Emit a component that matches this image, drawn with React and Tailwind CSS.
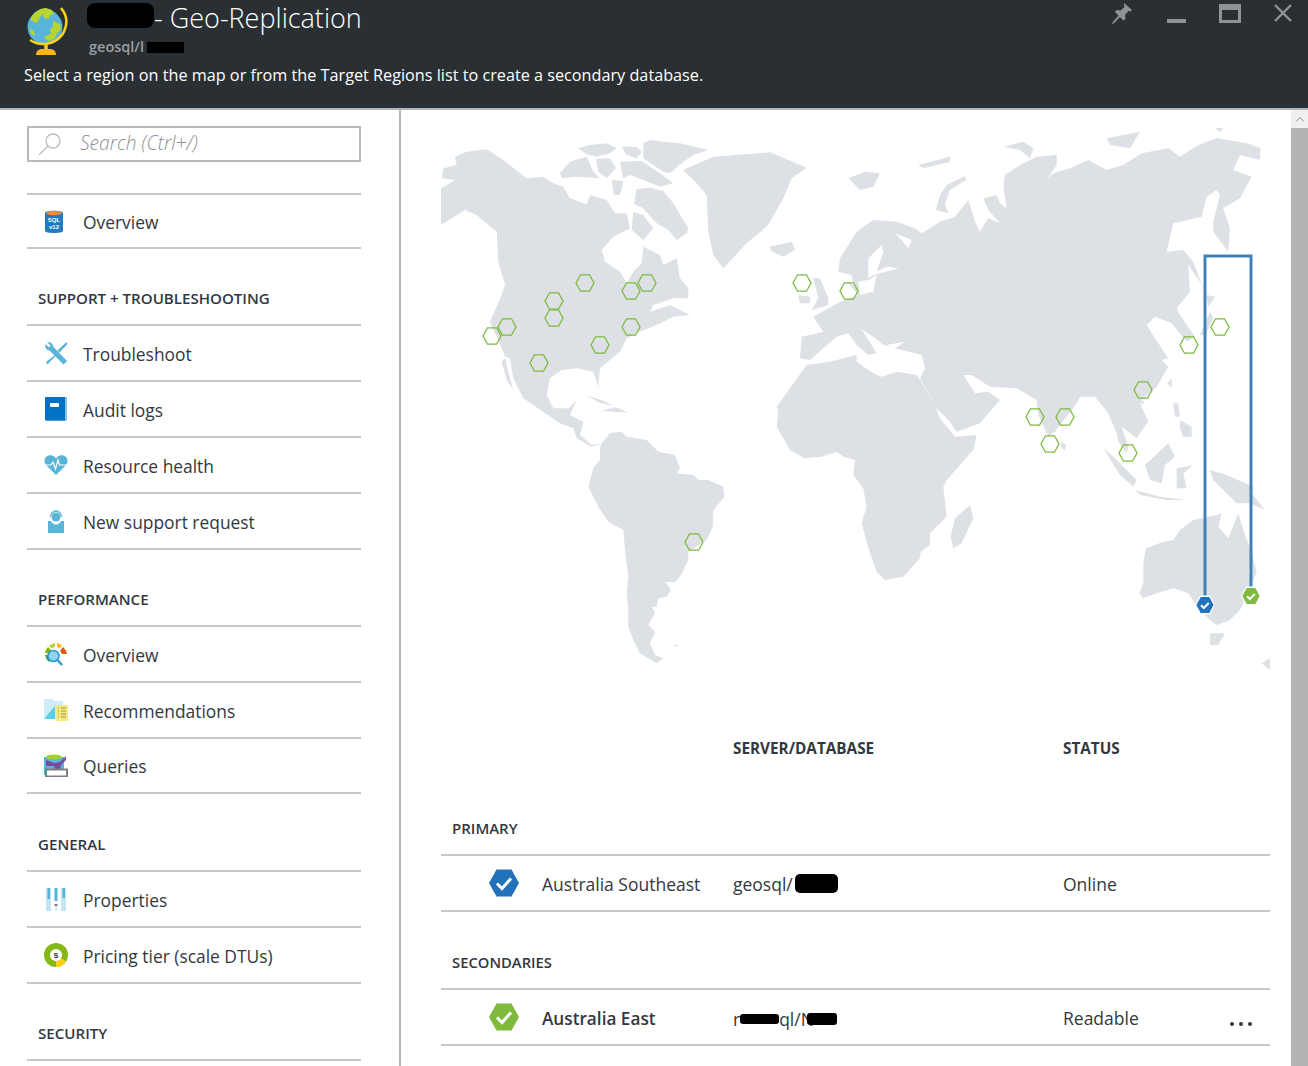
import React from 'react';

const LAND_COLOR = '#dde0e5';

// land shapes, typed in the coordinates of the crops they were traced from
const northAmerica = [
  '33,220 75,195 35,190 40,160 80,150 75,125 110,110 170,103 220,135 290,190 340,185 370,205 400,215 420,250 470,268 480,240 530,255 555,295 590,295 600,340 550,365 515,405 525,440 570,470 590,505 610,470 635,445 640,395 690,420 700,450 740,430 750,490 775,520 775,550 730,550 670,570 660,590 720,570 780,600 730,605 680,630 630,650 590,670 570,710 510,760 505,815 490,770 440,760 395,765 360,790 350,840 370,880 415,880 440,855 420,900 460,920 450,960 485,990 515,985 485,995 440,970 430,940 390,925 280,850 250,790 240,730 225,725 215,700 180,620 215,540 225,510 205,440 200,350 140,300 105,285 33,330',
  '215,740 225,730 240,790 250,825 230,795',
  '445,100 480,90 530,85 560,100 540,115 500,125 470,118',
  '640,85 660,75 700,80 750,85 835,105 790,120 760,140 720,175 700,170 640,130',
  '575,95 620,95 635,110 620,130 590,120',
  '390,175 420,140 470,125 490,170 510,190 440,185 395,190',
  '498,132 540,130 558,160 530,190 505,170',
  '570,140 635,138 700,182 730,205 690,215 640,195 600,180 580,190',
  '545,195 580,198 570,240 552,240',
  '620,222 660,218 700,228 730,265 775,340 770,355 740,375 715,345 680,325 640,280 612,268',
  '610,290 640,300 670,340 640,375 605,345',
  '760,165 850,125 1020,112 1130,158 1085,190 1060,250 1015,330 950,385 880,460 850,420 835,350 830,240 800,205',
  '1020,395 1085,380 1095,405 1060,425 1025,410',
  '1150,490 1170,490 1195,550 1195,570 1145,585 1165,550',
  '1105,540 1140,545 1140,565 1110,565',
];

const eurasia = [
  '240,790 290,880 330,920 350,951 420,925 480,855 445,830 405,835 370,780 395,780 450,815 530,820 590,855 595,900 625,965 645,950 710,865 720,845 765,845 805,895 830,955 835,980 860,1015 865,995 845,935 890,970 925,920 900,865 910,850 950,815 985,755 965,735 985,730 945,670 920,630 945,605 995,625 1040,680 1065,665 1020,600 1010,580 1050,530 1045,450 1080,500 1090,520 1060,440 1030,405 980,410 1000,325 1085,305 1100,245 1130,225 1140,240 1120,320 1120,350 1165,410 1170,340 1150,280 1200,250 1235,185 1180,165 1200,120 1260,135 1262,100 1220,85 1130,70 1075,90 1020,125 985,100 905,115 850,150 800,165 745,135 690,160 640,175 620,195 650,150 650,120 590,125 540,150 495,180 490,215 500,280 480,265 470,240 430,250 445,285 480,325 445,310 420,350 405,320 385,255 345,305 300,320 245,355 225,340 170,320 100,315 50,350 0,430 -5,470 35,480 40,510 20,500 55,540 0,560 -80,605 -50,650 -115,665 -120,730 -90,735 -50,700 -10,665 25,655 50,690 85,720 110,715 70,650 60,640 100,665 130,690 165,700 140,690 195,680 165,700 245,720 255,760',
  '288,285 300,240 320,210 375,183 378,195 330,225 315,265 325,295',
  '25,190 75,170 120,175 100,215 60,225',
  '235,150 330,125 330,140 250,160',
  '490,95 550,80 580,100 570,130 540,105',
  '800,70 900,50 870,100 810,90',
  '1125,40 1150,38 1140,50',
  '1080,660 1110,590 1120,610 1095,660',
  '1100,540 1125,545 1105,575',
];

const seas = [
  '125,390 85,430 85,490 100,480 120,475 175,460 140,455 110,470 130,410',
  '110,480 100,530 60,540 55,500 85,495',
  '165,355 215,375 205,400 185,375',
];

const southern = [
  '125,190 150,160 185,155 200,170 260,180 295,215 345,225 360,265 350,280 400,285 415,300 445,300 490,320 493,350 460,390 458,440 440,480 385,515 385,540 360,590 345,607 315,605 333,630 320,650 295,655 290,680 275,680 285,700 265,735 285,755 270,790 285,825 310,835 290,850 240,820 220,780 205,740 205,690 200,640 205,590 195,510 190,450 145,425 115,380 85,320 100,265 120,240 120,205',
  '650,80 740,-45 810,-55 890,-75 890,-55 940,-20 965,-10 1010,-25 1070,-15 1080,0 1125,75 1140,115 1185,170 1250,165 1240,210 1160,300 1150,320 1155,365 1160,410 1110,460 1110,495 1082,515 1080,535 1030,590 975,600 950,575 930,520 905,430 920,380 910,325 880,285 885,240 850,230 830,215 785,230 735,235 690,210 650,140 655,90',
  '1185,415 1230,375 1240,415 1205,490 1180,505 1172,470',
  '75,45 130,62 160,78 120,68',
  '125,92 165,82 205,97 170,96',
  '338,795 355,795 350,800',
];

const islands = [
  '562,130 575,115 575,145',
  '480,180 495,185 485,195',
  '243,305 258,315 255,330 245,325',
  '580,190 595,190 600,230 585,230',
  '600,240 635,260 635,290 610,290 600,265',
  '495,375 565,310 585,350 555,375 545,430 510,420',
  '370,325 400,350 470,420 460,440 420,405',
  '465,450 540,470 620,480 560,480 480,465',
  '590,385 640,375 610,400 620,445 590,445',
  '690,390 740,405 820,440 815,460 855,510 810,490 770,490 740,460 700,420',
];

const australia = [
  '48,205 100,185 130,180 150,150 190,120 215,115 260,105 275,100 265,140 295,175 325,100 340,150 360,205 380,275 355,340 330,390 300,420 260,435 240,420 205,385 175,340 130,325 80,340 40,355 28,340 40,310 40,250',
  '240,460 285,460 265,495 240,495',
  '395,550 420,535 420,570',
];

const regions = [
  [585, 283], [554, 301], [554, 318], [631, 291], [647, 283], [631, 327], [600, 345], [539, 363], [492, 336], [507, 327],
  [802, 283], [849, 291], [1220, 327], [1189, 345], [1143, 390], [1035, 417], [1065, 417], [1050, 444], [1128, 453], [694, 542],
];

const hexPoints = (x, y, w, h) =>
  `${x - w},${y} ${x - w / 2},${y - h} ${x + w / 2},${y - h} ${x + w},${y} ${x + w / 2},${y + h} ${x - w / 2},${y + h}`;

const Marker = ({ x, y, fill }) => (
  <g>
    <polygon points={hexPoints(x, y, 10, 9.5)} fill="#fff" />
    <polygon points={hexPoints(x, y, 8.6, 8)} fill={fill} />
    <path d={`M${x - 4} ${y + 0.3}l2.8 2.7 5-5`} fill="none" stroke="#fff" strokeWidth="2" />
  </g>
);

const WorldMap = () => (
  <svg viewBox="441 110 829 570" className="block w-[829px] h-[570px]">
    <g fill={LAND_COLOR}>
      <g transform="translate(430 115) scale(0.3333)">
        {northAmerica.map((p) => <polygon key={p} points={p} />)}
      </g>
      <g transform="translate(840 115) scale(0.3333)">
        {eurasia.map((p) => <polygon key={p} points={p} />)}
        {seas.map((p) => <polygon key={p} points={p} fill="#fff" />)}
      </g>
      <g transform="translate(560 380) scale(0.3333)">
        {southern.map((p) => <polygon key={p} points={p} />)}
      </g>
      <g transform="translate(980 340) scale(0.3333)">
        {islands.map((p) => <polygon key={p} points={p} />)}
      </g>
      <g transform="translate(1130 480) scale(0.3333)">
        {australia.map((p) => <polygon key={p} points={p} />)}
      </g>
    </g>
    {regions.map(([x, y]) => (
      <polygon key={`${x}-${y}`} points={hexPoints(x, y, 9, 8.2)} fill="none" stroke="#7dba3e" strokeWidth="1.3" />
    ))}
    <path d="M1205 600V256H1251V590" fill="none" stroke="#4083bb" strokeWidth="3" />
    <Marker x={1205} y={605} fill="#2272b9" />
    <Marker x={1251} y={596} fill="#7fba3f" />
  </svg>
);

const GlobeLogo = () => (
  <svg viewBox="0 0 42 48" className="w-[42px] h-[48px] mt-[4px]">
    <circle cx="18" cy="20" r="17.500" fill="#59b4d9" />
    <path d="M4 11c3-6 9-10 15-10l6 2 2 4-4 1-1 4-5-1-1-4-3 3-2 5-4 1-1-3-2 2zM26 14l7 3 1 6-4 3-2 5-6 3-5-3 3-3 4-1-1-5 3-2zM3 21l4 3 1 5-4-2z" fill="#b8d432" />
    <path d="M34 1c5 6 7 13 4 21-3 9-12 15-22 15-5 0-10-2-13-4" fill="none" stroke="#fcd116" strokeWidth="2.600" />
    <path d="M19 37v5" stroke="#fcd116" strokeWidth="3.500" />
    <path d="M9 48c0-4 3-6 6-6h8c3 0 6 2 6 6z" fill="#fcb714" />
  </svg>
);

const WindowControls = () => (
  <div className="flex items-start text-[#8f9396]">
    <svg viewBox="0 0 22 22" className="w-[22px] h-[22px] mr-[34px] mt-[2px]" fill="currentColor">
      <path d="M13 1l8 7-1.500 1.500-2-.5-3.500 4 .5 4-2 1.500-3.500-3.500L2 22l-1-1 6.500-7.500L4 10l1.500-2 4 .5 4-3.500-.5-2z" />
    </svg>
    <div className="w-[19px] h-[4px] bg-current mt-[19px] mr-[33px]"></div>
    <div className="w-[22px] h-[19px] border-[3px] border-t-[6px] border-current mt-[4px] mr-[33px]"></div>
    <svg viewBox="0 0 18 18" className="w-[18px] h-[18px] mt-[4px] mr-[16px]" fill="none" stroke="currentColor" strokeWidth="2.400">
      <path d="M1 1l16 16M17 1L1 17" />
    </svg>
  </div>
);

const Header = () => (
  <div className="h-[108px] bg-[#2a2f33] flex justify-between shrink-0">
    <div>
      <div className="flex pl-[27px] pt-[3px]">
        <GlobeLogo />
        <div className="ml-[18px]">
          <div className="flex items-start h-[30px] text-white font-light text-[27px] leading-[30px]">
            <span className="w-[67px] h-[25px] bg-black rounded-[8px]"></span>
            <span>- Geo-Replication</span>
          </div>
          <div className="flex items-center mt-[7px] h-[14px] pl-[2px] text-[#9a9fa3] font-semibold text-[14.500px] leading-[14px]">
            <span>geosql/l</span>
            <span className="w-[37px] h-[11px] bg-black ml-[3px]"></span>
          </div>
        </div>
      </div>
      <p className="pl-[24px] mt-[10px] text-white text-[16.230px] leading-[20px]">
        Select a region on the map or from the Target Regions list to create a secondary database.
      </p>
    </div>
    <WindowControls />
  </div>
);

const DbIcon = () => (
  <svg viewBox="0 0 20 23" className="w-[20px] h-[23px] mr-[4px]">
    <path d="M1 3c0-3 18-3 18 0v18c0 2.600-18 2.600-18 0z" fill="#1f7cc2" />
    <ellipse cx="10" cy="3" rx="8" ry="2.200" fill="#f08a3c" />
    <text x="10" y="12" textAnchor="middle" fontSize="6" fontWeight="700" fill="#fff" fontFamily="Liberation Sans, sans-serif">SQL</text>
    <text x="10" y="18.500" textAnchor="middle" fontSize="6" fontWeight="700" fill="#fff" fontFamily="Liberation Sans, sans-serif">v12</text>
  </svg>
);

const ToolsIcon = () => (
  <svg viewBox="0 0 24 24" className="w-[24px] h-[24px]" fill="#59b4d9">
    <path d="M3 1l3.500 3.500L5 6.500 1.500 3C.5 6 2 9 5.500 9.500L19.500 23.500 23 20 9.500 6C9 2.500 6 .5 3 1z" />
    <path d="M22.500 1l1 2-8 8.500-2-2zM11 14l-9 7 1.500 2.500 7.500-8z" />
  </svg>
);

const BookIcon = () => (
  <svg viewBox="0 0 22 24" className="w-[22px] h-[24px]">
    <rect x="1" y="0" width="21" height="24" rx="1" fill="#8fc1e6" />
    <path d="M0 1a1 1 0 0 1 1-1h19v23.500H1a1 1 0 0 1-1-1z" fill="#0072c6" />
    <rect x="5" y="6" width="9" height="4" rx="1" fill="#fff" />
  </svg>
);

const HeartIcon = () => (
  <svg viewBox="0 0 24 20" className="w-[24px] h-[20px]">
    <path d="M12 20L2 10C-2 4 3-1 8 .5c2 .5 3 1.500 4 3 1-1.500 2-2.500 4-3 5-1.500 10 3.500 6 9.500z" fill="#59b4d9" />
    <path d="M1 10h6l2-3 2.500 7 2.500-9 1.500 5H23" fill="none" stroke="#fff" strokeWidth="1.200" />
  </svg>
);

const PersonIcon = () => (
  <svg viewBox="0 0 18 24" className="w-[18px] h-[24px]" fill="#59b4d9">
    <circle cx="9" cy="8" r="4.500" />
    <path d="M3.500 8a5.500 6 0 0 1 11 0" fill="none" stroke="#59b4d9" strokeWidth="1.300" />
    <path d="M1 12h3c1 2.500 3 3.500 5 3.500s4-1 5-3.500h3v12H1z" />
  </svg>
);

const GaugeIcon = () => (
  <svg viewBox="0 0 24 24" className="w-[24px] h-[24px]">
    <path d="M1 11a11 11 0 0 1 3-6l3 3a7 7 0 0 0-1.500 3z" fill="#7fba00" />
    <path d="M5 4a11 11 0 0 1 6-3v4a7 7 0 0 0-3 1.500z" fill="#b8d432" />
    <path d="M13 1a11 11 0 0 1 5 2.500l-2.500 3A7 7 0 0 0 13 5z" fill="#fcb714" />
    <path d="M19 5a11 11 0 0 1 4 7h-5a7 7 0 0 0-2-3z" fill="#dd5900" />
    <path d="M1 13h4a7 7 0 0 0 2 4l-2 3a11 11 0 0 1-4-7z" fill="#3e9b4b" />
    <circle cx="9.500" cy="14" r="5.500" fill="#8fd4ee" stroke="#2e9bd0" strokeWidth="1.600" />
    <path d="M13.500 18l4.500 5" stroke="#2e9bd0" strokeWidth="2.400" />
  </svg>
);

const FolderIcon = () => (
  <svg viewBox="0 0 24 22" className="w-[24px] h-[22px]">
    <path d="M0 0h8l2 2h9v18H0z" fill="#cdeef8" />
    <path d="M0 20L11 7v13z" fill="#59d0e8" />
    <rect x="12" y="6" width="12" height="16" fill="#f5e887" />
    <path d="M14 9h1M17 9h5M14 12h1M17 12h5M14 15h1M17 15h5M14 18h1M17 18h5" stroke="#a09a2e" strokeWidth="1.200" />
  </svg>
);

const QueriesIcon = () => (
  <svg viewBox="0 0 24 23" className="w-[24px] h-[23px]">
    <path d="M0 3h20v18H0z" fill="#59b4d9" />
    <ellipse cx="10" cy="3" rx="8" ry="2.500" fill="#a8cf2b" />
    <path d="M2 6l8 3 6-1 6-6v4l-5 5-1 4h-5l-1-3H2z" fill="#7a4a9e" />
    <rect x="2" y="15.500" width="21" height="7" fill="#fff" stroke="#7f7f7f" strokeWidth="2" />
  </svg>
);

const SlidersIcon = () => (
  <svg viewBox="0 0 20 23" className="w-[20px] h-[23px]">
    <rect x="0" y="0" width="5" height="23" fill="#c5e4f2" />
    <rect x="15" y="0" width="5" height="23" fill="#c5e4f2" />
    <rect x="1.500" y="0" width="2.500" height="11" fill="#59b4d9" />
    <rect x="16.500" y="0" width="2.500" height="10" fill="#59b4d9" />
    <rect x="8.500" y="0" width="3" height="13" fill="#59b4d9" />
    <rect x="8.500" y="16" width="3" height="2" fill="#7f7f7f" />
    <rect x="9.300" y="18" width="1.500" height="5" fill="#c5e4f2" />
  </svg>
);

const PricingIcon = () => (
  <svg viewBox="0 0 24 24" className="w-[24px] h-[24px]">
    <circle cx="12" cy="12" r="12" fill="#84b816" />
    <path d="M22 18.500A12 12 0 0 1 12 24v-7a5 5 0 0 0 5-2z" fill="#fcd116" />
    <circle cx="12" cy="12" r="6" fill="#fff" />
    <text x="12" y="15" textAnchor="middle" fontSize="8" fontWeight="700" fill="#3a3a3a" fontFamily="Liberation Sans, sans-serif">$</text>
  </svg>
);

const Row = ({ icon, label, className = 'h-[56px]' }) => (
  <div className={`flex items-center border-b-2 border-[#c8c8c8] ${className}`}>
    <div className="w-[56px] flex justify-center pl-[2px]">{icon}</div>
    <span className="pt-[2px] text-[#32383f] text-[17.400px]">{label}</span>
  </div>
);

const SectionTitle = ({ children, className = 'h-[77px] text-[15.100px]' }) => (
  <div className={`flex items-end pl-[11px] pb-[16px] border-b-2 border-[#c8c8c8] text-[#32383f] font-semibold leading-[20px] ${className}`}>
    {children}
  </div>
);

const Sidebar = () => (
  <div className="w-[401px] shrink-0 border-r-2 border-[#b4b4b4] pl-[27px] pr-[38px]">
    <div className="flex items-center h-[36px] mt-[16px] border-2 border-[#b8b8b8]">
      <svg viewBox="0 0 24 24" className="w-[24px] h-[24px] ml-[9px]" fill="none" stroke="#bcbcbc" strokeWidth="1.300">
        <circle cx="15" cy="9" r="7" />
        <path d="M10 14L1 23" />
      </svg>
      <span className="ml-[18px] mb-[2px] italic font-light text-[#8f8f8f] text-[19.200px]">Search (Ctrl+/)</span>
    </div>
    <div className="mt-[31px] border-t-2 border-[#c8c8c8]">
      <Row icon={<DbIcon />} label="Overview" className="h-[54px]" />
    </div>
    <SectionTitle>SUPPORT + TROUBLESHOOTING</SectionTitle>
    <Row icon={<ToolsIcon />} label="Troubleshoot" />
    <Row icon={<BookIcon />} label="Audit logs" />
    <Row icon={<HeartIcon />} label="Resource health" />
    <Row icon={<PersonIcon />} label="New support request" />
    <SectionTitle>PERFORMANCE</SectionTitle>
    <Row icon={<GaugeIcon />} label="Overview" />
    <Row icon={<FolderIcon />} label="Recommendations" />
    <Row icon={<QueriesIcon />} label="Queries" className="h-[55px]" />
    <SectionTitle className="h-[78px] text-[15.100px]">GENERAL</SectionTitle>
    <Row icon={<SlidersIcon />} label="Properties" />
    <Row icon={<PricingIcon />} label="Pricing tier (scale DTUs)" />
    <SectionTitle>SECURITY</SectionTitle>
  </div>
);

const StatusHex = ({ fill }) => (
  <svg viewBox="0 0 30 28" className="w-[30px] h-[28px]">
    <polygon points="0,14 7.500,0.500 22.500,0.500 30,14 22.500,27.500 7.500,27.500" fill={fill} />
    <path d="M8 14.500l5 5 9-10" fill="none" stroke="#fff" strokeWidth="3" />
  </svg>
);

const tableCols = 'grid grid-cols-[101px_191px_330px_1fr] items-center';

const Main = () => (
  <div className="flex-1 pl-[40px] pr-[21px]">
    <WorldMap />
    <div className={`${tableCols} h-[40px] mt-[48px] text-[#32383f] font-bold text-[15.300px]`}>
      <div></div>
      <div></div>
      <div>SERVER/DATABASE</div>
      <div>STATUS</div>
    </div>
    <SectionTitle className="h-[88px] text-[15px]">PRIMARY</SectionTitle>
    <div className={`${tableCols} h-[56px] border-b-2 border-[#c8c8c8] text-[#32383f] text-[17.500px]`}>
      <div className="pl-[48px] flex"><StatusHex fill="#2272b9" /></div>
      <div className="pt-[2px]">Australia Southeast</div>
      <div className="flex items-center pt-[2px]">
        <span>geosql/</span>
        <span className="w-[43px] h-[19px] mb-[1px] ml-[2px] bg-black rounded-[5px]"></span>
      </div>
      <div className="pt-[2px]">Online</div>
    </div>
    <SectionTitle className="h-[78px] pb-[15px] text-[14.800px]">SECONDARIES</SectionTitle>
    <div className={`${tableCols} h-[56px] border-b-2 border-[#c8c8c8] text-[#32383f] text-[17.500px] font-medium`}>
      <div className="pl-[48px] flex"><StatusHex fill="#7fba3f" /></div>
      <div className="pt-[4px] font-semibold text-[17.200px]">Australia East</div>
      <div className="flex items-center pt-[4px]">
        <span>r</span>
        <span className="w-[39px] h-[10px] bg-black rounded-[3px]"></span>
        <span>ql/N</span>
        <span className="w-[30px] h-[12px] ml-[-7px] bg-black rounded-[3px]"></span>
      </div>
      <div className="flex items-center justify-between">
        <span className="pt-[2px]">Readable</span>
        <span className="flex gap-[5px] mt-[13px] mr-[18px]">
          <span className="w-[4px] h-[4px] rounded-full bg-[#32383f]"></span>
          <span className="w-[4px] h-[4px] rounded-full bg-[#32383f]"></span>
          <span className="w-[4px] h-[4px] rounded-full bg-[#32383f]"></span>
        </span>
      </div>
    </div>
  </div>
);

const Scrollbar = () => (
  <div className="w-[17px] shrink-0 bg-[#b4b4b4]">
    <div className="h-[18px] bg-[#f0f0f0] flex items-center justify-center">
      <svg viewBox="0 0 10 6" className="w-[10px] h-[6px]" fill="none" stroke="#8a8a8a" strokeWidth="1">
        <path d="M1 5.500l4-4 4 4" />
      </svg>
    </div>
  </div>
);

export default function App() {
  return (
    <div className="h-[1066px] overflow-hidden bg-white flex flex-col font-['Open_Sans',sans-serif]">
      <Header />
      <div className="h-[2px] bg-[#b4b4b4] shrink-0"></div>
      <div className="flex flex-1 min-h-0">
        <Sidebar />
        <Main />
        <Scrollbar />
      </div>
    </div>
  );
}
